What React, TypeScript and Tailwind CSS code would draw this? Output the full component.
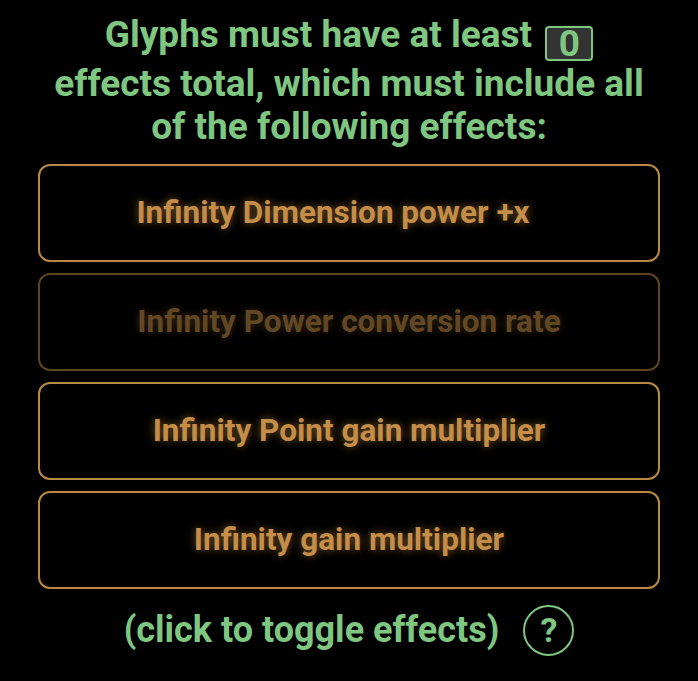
const effects = [
  { label: "Infinity Dimension power +x", active: true, pad: "pr-[32px]" },
  { label: "Infinity Power conversion rate", active: false, pad: "" },
  { label: "Infinity Point gain multiplier", active: true, pad: "" },
  { label: "Infinity gain multiplier", active: true, pad: "" },
];

function EffectButton({ label, active, pad }: { label: string; active: boolean; pad: string }) {
  return (
    <div
      className={`flex h-[98px] items-center justify-center rounded-[12px] border-[2.5px] border-[#b98a45] text-[31.5px] font-bold text-[#c48d48] [text-shadow:0_0_8px_rgba(201,144,72,0.6)] ${pad} ${
        active ? "" : "opacity-50"
      }`}
    >
      {label}
    </div>
  );
}

export default function App() {
  return (
    <div className="min-h-[681px] w-full bg-black font-['Roboto','Liberation_Sans',sans-serif] text-[#7fc680]">
      <div className="mx-auto flex w-[622px] flex-col pt-[13px]">
        <div className="text-center text-[37px] font-bold leading-[43px]">
          Glyphs must have at least{" "}
          <span className="mb-[1px] ml-[4px] inline-block h-[35px] w-[48px] rounded-[4px] border-2 border-[#7fc680] bg-[#333333] text-center align-[-9px] text-[37px] leading-[31px]">
            0
          </span>
          <br />
          effects total, which must include all
          <br />
          of the following effects:
        </div>
        <div className="mt-[16px] flex flex-col gap-[11px]">
          {effects.map((e) => (
            <EffectButton key={e.label} label={e.label} active={e.active} pad={e.pad} />
          ))}
        </div>
        <div className="mt-[16px] flex items-center justify-center gap-[24px] text-[36px] font-bold leading-[43px]">
          <span>(click to toggle effects)</span>
          <span className="flex h-[51px] w-[51px] items-center justify-center rounded-full border-[2.5px] border-[#7fc680] text-[34px]">
            ?
          </span>
        </div>
      </div>
    </div>
  );
}
